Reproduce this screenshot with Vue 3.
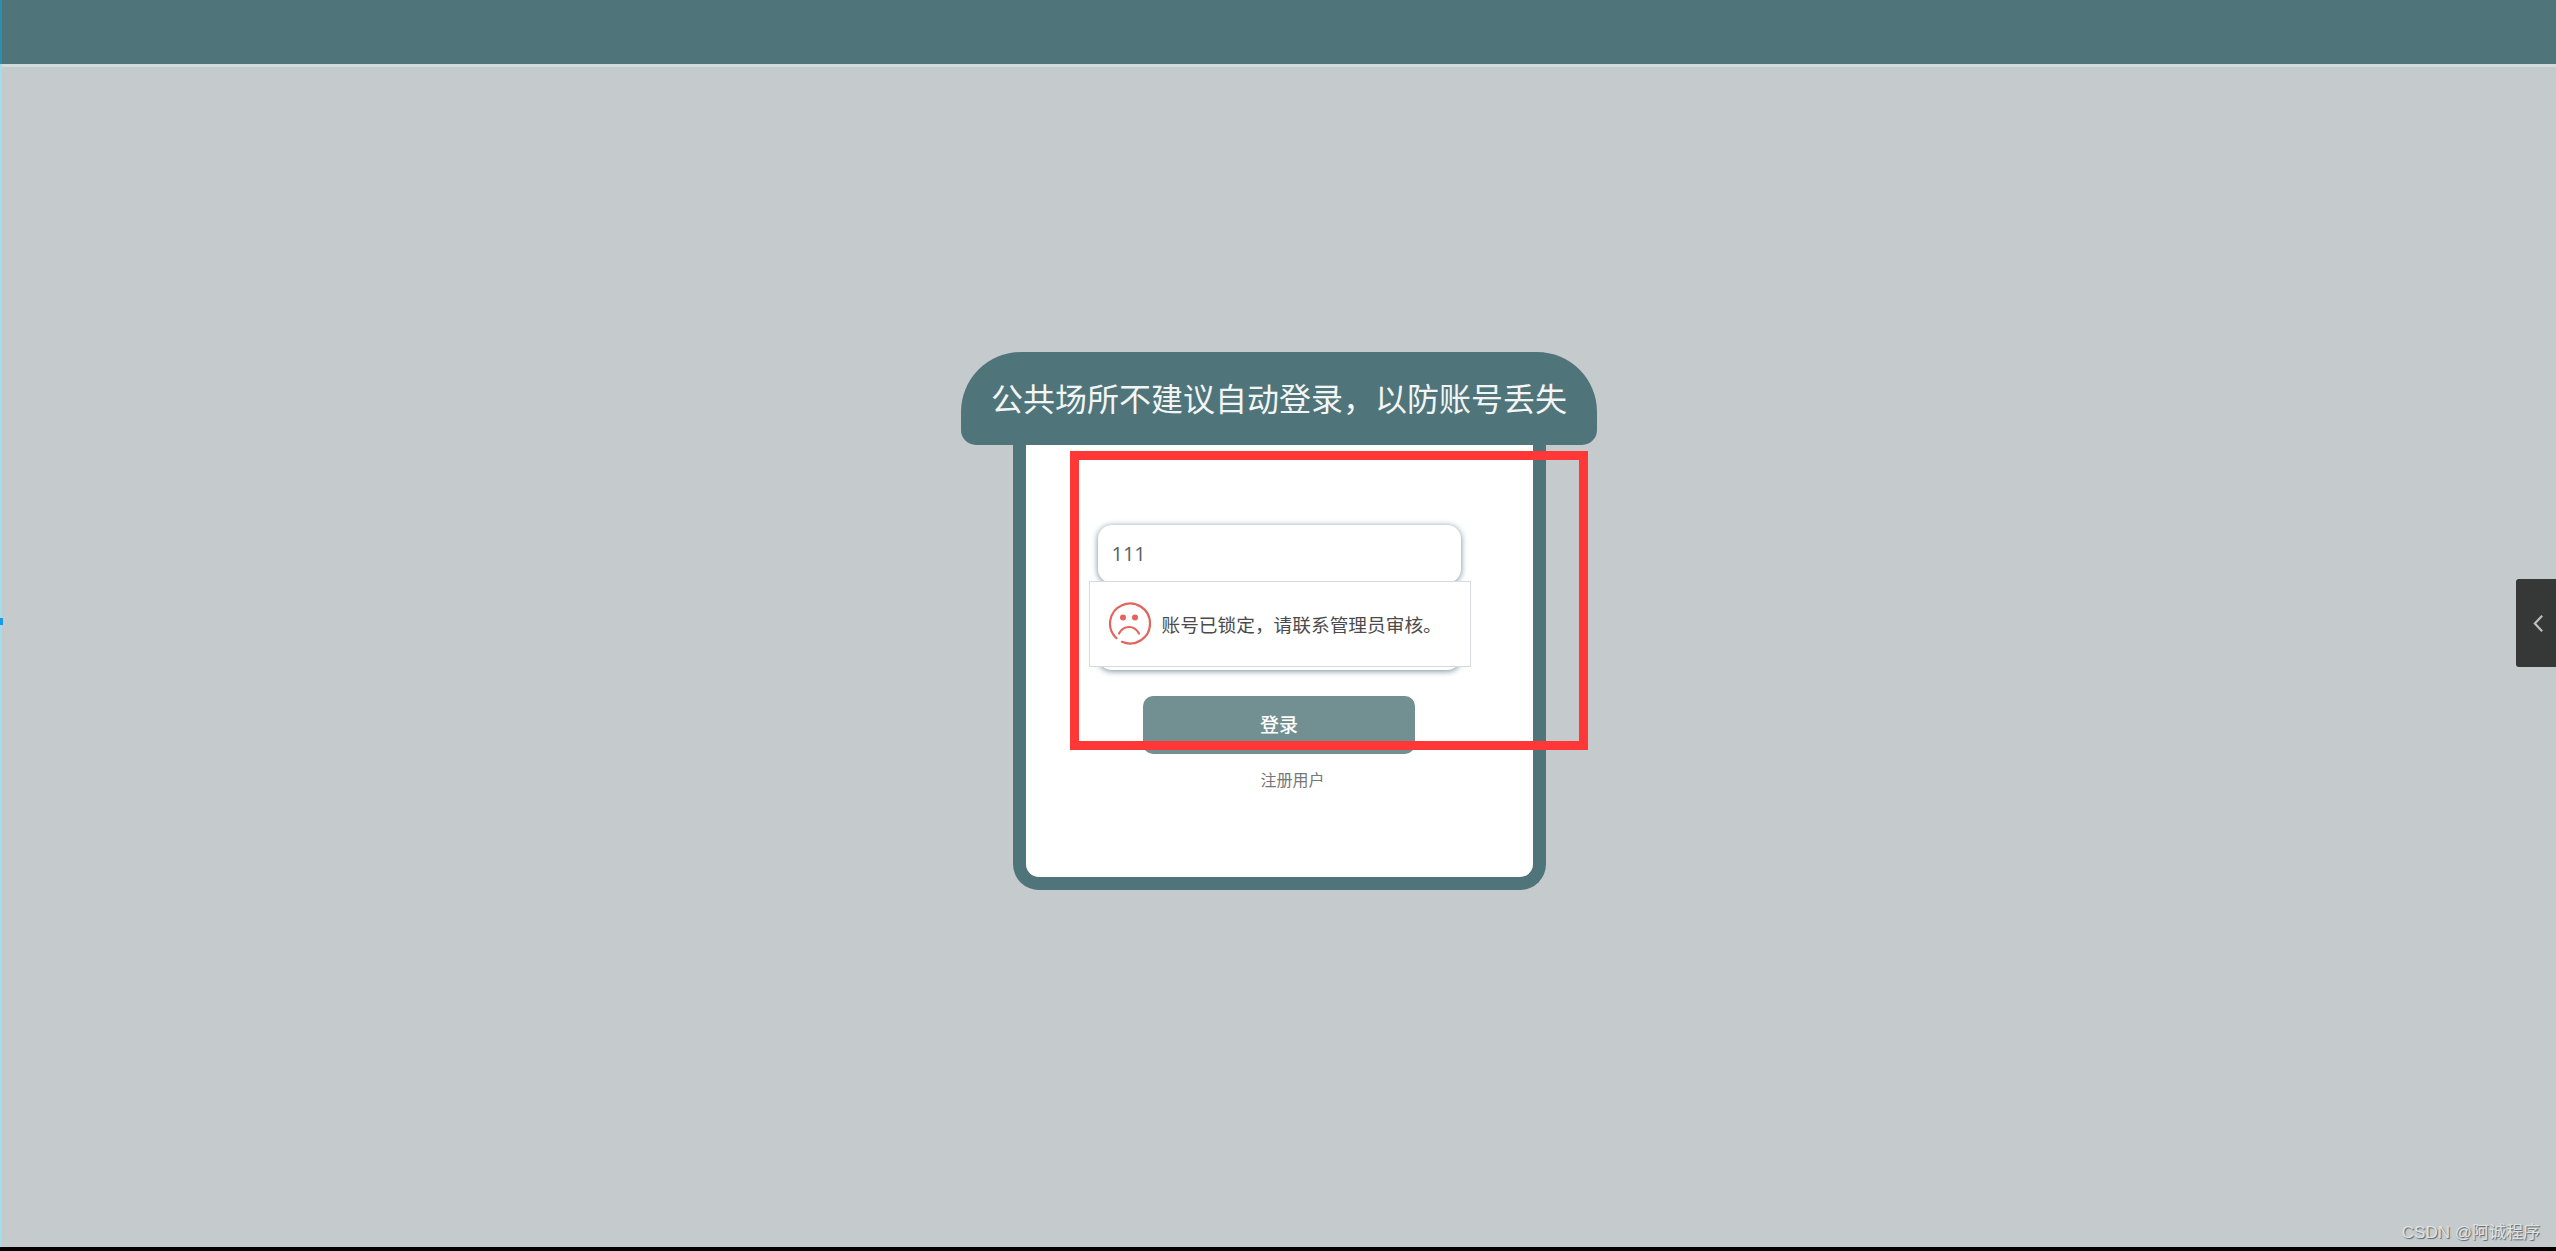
<script setup>
const title = '公共场所不建议自动登录，以防账号丢失'
const message = '账号已锁定，请联系管理员审核。'
</script>

<template>
  <div class="screen">
    <header class="topbar"></header>

    <main class="stage">
      <section class="login">
        <h1 class="banner">{{ title }}</h1>
        <div class="card">
          <div class="field field-first">111</div>
          <div class="field field-second"></div>
          <button class="submit" type="button">登录</button>
          <a class="register">注册用户</a>

          <div class="toast">
            <svg class="sad" viewBox="0 0 44 44" aria-hidden="true">
              <path class="sad-ring" d="M9.5 37.2A20 20 0 1 1 15 40.8" />
              <circle class="sad-eye" cx="16" cy="16.5" r="3" />
              <circle class="sad-eye" cx="28" cy="16.5" r="3" />
              <path class="sad-mouth" d="M12 32.5C15 27 19 26 22 26S29 27 32 32.5" />
            </svg>
            <span class="toast-text">{{ message }}</span>
          </div>
        </div>
      </section>
    </main>

    <footer class="bottombar"></footer>

    <div class="edge"><i class="edge-mark"></i></div>
    <div class="side-tab">
      <svg viewBox="0 0 12 20" aria-hidden="true"><path d="M10 1.5 2 10l8 8.5" /></svg>
    </div>
    <div class="annotation"></div>
    <div class="watermark">CSDN @阿诚程序</div>
  </div>
</template>

<style scoped>
.screen {
  position: relative;
  display: flex;
  flex-direction: column;
  width: 2556px;
  height: 1251px;
  overflow: hidden;
  background: #c5cbcd;
  font-family: "Noto Sans CJK SC", "Open Sans", sans-serif;
}
.topbar {
  flex: none;
  height: 64px;
  background: #4f747a;
  border-top: 1px solid #7d9296;
  border-bottom: 3px solid #d2dcdc;
  box-sizing: content-box;
  margin-top: -1px;
}
.stage {
  flex: 1;
  display: flex;
  justify-content: center;
  padding: 285px 0 0 2px;
}
.login {
  display: flex;
  flex-direction: column;
  align-items: center;
  width: 636px;
}
.banner {
  box-sizing: border-box;
  width: 636px;
  height: 93px;
  margin: 0;
  padding-top: 16px;
  border-radius: 60px 60px 15px 15px;
  background: #4f747a;
  color: #f2f5f4;
  font-size: 32px;
  font-weight: 400;
  line-height: 58px;
  text-align: center;
  white-space: nowrap;
}
.card {
  position: relative;
  box-sizing: border-box;
  display: flex;
  flex-direction: column;
  align-items: center;
  width: 533px;
  height: 445px;
  padding-top: 80px;
  background: #fff;
  border: 13px solid #4f747a;
  border-top: 0;
  border-radius: 0 0 26px 26px;
}
.field {
  box-sizing: border-box;
  flex: none;
  width: 363px;
  height: 58px;
  padding-left: 14px;
  border-radius: 14px;
  background: #fff;
  box-shadow: 0 1px 6px #6f8a96;
  color: #5a5f63;
  font-family: "Open Sans", sans-serif;
  font-size: 20px;
  line-height: 58px;
}
.field-second {
  margin-top: 29px;
}
.submit {
  flex: none;
  width: 272px;
  height: 58px;
  margin-top: 26px;
  padding: 0 0 3px;
  border: 0;
  border-radius: 10px;
  background: #729092;
  color: #fff;
  font-family: inherit;
  font-size: 19px;
  font-weight: 500;
}
.register {
  margin: 12px 0 0 27px;
  color: #777;
  font-size: 16px;
  line-height: 26px;
}
.toast {
  position: absolute;
  top: 136px;
  left: 63px;
  box-sizing: border-box;
  display: flex;
  align-items: center;
  width: 382px;
  height: 86px;
  padding: 0 0 2px 17px;
  background: #fff;
  border: 1.5px solid #d6dadc;
}
.sad {
  flex: none;
  width: 44px;
  height: 44px;
}
.sad-ring,
.sad-mouth {
  fill: none;
  stroke: #e2645a;
  stroke-width: 2.2;
  stroke-linecap: round;
}
.sad-eye {
  fill: #e2645a;
}
.toast-text {
  margin-left: 11px;
  color: #4b4b4b;
  font-size: 18.7px;
  white-space: nowrap;
}
.bottombar {
  flex: none;
  height: 4px;
  background: #000;
}
.edge {
  position: absolute;
  inset: 0 auto 4px 0;
  width: 2px;
  background: linear-gradient(#2a8fae 64px, #a3dcec 64px);
}
.edge-mark {
  position: absolute;
  top: 618px;
  left: 0;
  width: 3px;
  height: 7px;
  background: #169bea;
}
.side-tab {
  position: absolute;
  top: 579px;
  right: 0;
  display: flex;
  align-items: center;
  justify-content: center;
  width: 40px;
  height: 88px;
  border-radius: 3px 0 0 3px;
  background: #353836;
}
.side-tab svg {
  width: 11px;
  height: 19px;
  margin-left: 4px;
  fill: none;
  stroke: #bdbfbd;
  stroke-width: 2.4;
}
.annotation {
  position: absolute;
  top: 451px;
  left: 1070px;
  box-sizing: border-box;
  width: 518px;
  height: 299px;
  border: 9px solid #ff3737;
}
.watermark {
  position: absolute;
  right: 16px;
  bottom: 7px;
  color: #dfe3e4;
  font-family: "Liberation Sans", "Noto Sans CJK SC", sans-serif;
  font-size: 17px;
  line-height: 22px;
  white-space: nowrap;
  text-shadow: 1px 1px 1px #5d6264;
}
</style>
